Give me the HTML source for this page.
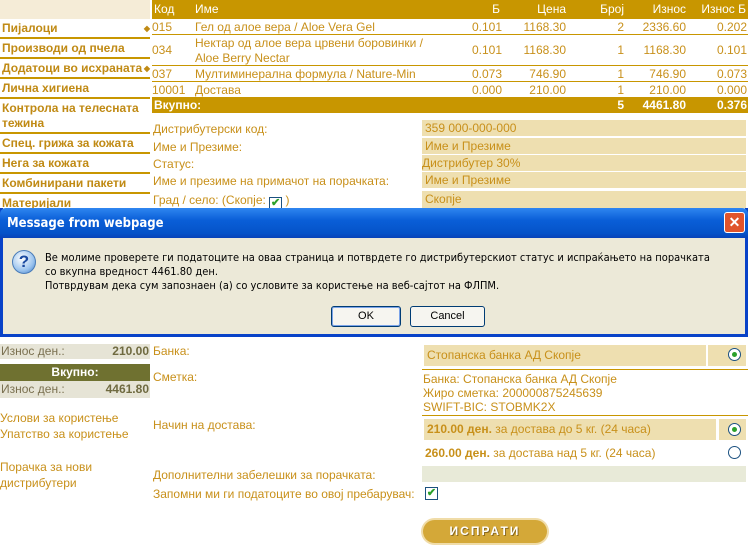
<!DOCTYPE html>
<html><head><meta charset="utf-8"><style>
*{margin:0;padding:0;box-sizing:border-box}
body{width:748px;height:550px;overflow:hidden;background:#fff;font-family:"Liberation Sans",Arial,sans-serif;font-size:12px;color:#c8901a;position:relative}
.a{position:absolute;white-space:nowrap}
.m{position:absolute;left:0;width:150px;font-weight:bold;font-size:12px;color:#c08a14;border-bottom:2px solid #c89600;padding-left:2px}
.hd{background:#c89600;color:#fff}
.r{text-align:right}
.f{position:absolute;background:#eedfb0;padding-left:3px;line-height:16px}
.line{position:absolute;height:1px;background:#c89600}
.rad{position:absolute;width:13px;height:13px;border:1px solid #1c5180;border-radius:50%;background:#fff}
.rad.on::after{content:"";position:absolute;left:3px;top:3px;width:5px;height:5px;border-radius:50%;background:#2aa02a}
.chk{position:absolute;width:13px;height:13px;border:1px solid #1c5180;background:#fff;color:#2aa02a;font-size:11px;line-height:11px;text-align:center;font-weight:bold}
</style></head><body>
<div class="a" style="left:0;top:0;width:150px;height:19px;background:#f5ecd7"></div>
<div class="m" style="top:19px;height:20px;line-height:19px">Пијалоци<span style="position:absolute;right:0;font-size:8px">◆</span></div>
<div class="m" style="top:39px;height:20px;line-height:19px">Производи од пчела</div>
<div class="m" style="top:59px;height:20px;line-height:19px">Додатоци во исхраната<span style="position:absolute;right:0;font-size:8px">◆</span></div>
<div class="m" style="top:79px;height:20px;line-height:19px">Лична хигиена</div>
<div class="m" style="top:99px;height:35px;line-height:15px;padding-top:2px">Контрола на телесната<br>тежина</div>
<div class="m" style="top:134px;height:20px;line-height:19px">Спец. грижа за кожата</div>
<div class="m" style="top:154px;height:20px;line-height:19px">Нега за кожата</div>
<div class="m" style="top:174px;height:20px;line-height:19px">Комбинирани пакети</div>
<div class="m" style="top:194px;height:20px;line-height:19px;border:0">Материјали</div>

<div class="a hd" style="left:152px;top:0;width:596px;height:19px"></div>
<div class="a" style="left:154px;top:2px;color:#fff">Код</div>
<div class="a" style="left:195px;top:2px;color:#fff">Име</div>
<div class="a r" style="left:440px;top:2px;width:60px;color:#fff">Б</div>
<div class="a r" style="left:500px;top:2px;width:66px;color:#fff">Цена</div>
<div class="a r" style="left:560px;top:2px;width:64px;color:#fff">Број</div>
<div class="a r" style="left:620px;top:2px;width:66px;color:#fff">Износ</div>
<div class="a r" style="left:686px;top:2px;width:60px;color:#fff">Износ Б</div>

<div class="line" style="left:152px;top:34px;width:596px"></div>
<div class="line" style="left:152px;top:65px;width:596px"></div>
<div class="line" style="left:152px;top:81px;width:596px"></div>
<div class="a" style="left:152px;top:20px">015</div><div class="a" style="left:195px;top:20px">Гел од алое вера / Aloe Vera Gel</div>
<div class="a" style="left:152px;top:43px">034</div><div class="a" style="left:195px;top:36px;line-height:15px">Нектар од алое вера црвени боровинки /<br>Aloe Berry Nectar</div>
<div class="a" style="left:152px;top:67px">037</div><div class="a" style="left:195px;top:67px">Мултиминерална формула / Nature-Min</div>
<div class="a" style="left:152px;top:83px">10001</div><div class="a" style="left:195px;top:83px">Достава</div>
<div class="a r" style="left:420px;top:20px;width:82px">0.101</div>
<div class="a r" style="left:420px;top:43px;width:82px">0.101</div>
<div class="a r" style="left:420px;top:67px;width:82px">0.073</div>
<div class="a r" style="left:420px;top:83px;width:82px">0.000</div>
<div class="a r" style="left:500px;top:20px;width:66px">1168.30</div>
<div class="a r" style="left:500px;top:43px;width:66px">1168.30</div>
<div class="a r" style="left:500px;top:67px;width:66px">746.90</div>
<div class="a r" style="left:500px;top:83px;width:66px">210.00</div>
<div class="a r" style="left:560px;top:20px;width:64px">2</div>
<div class="a r" style="left:560px;top:43px;width:64px">1</div>
<div class="a r" style="left:560px;top:67px;width:64px">1</div>
<div class="a r" style="left:560px;top:83px;width:64px">1</div>
<div class="a r" style="left:600px;top:20px;width:86px">2336.60</div>
<div class="a r" style="left:600px;top:43px;width:86px">1168.30</div>
<div class="a r" style="left:600px;top:67px;width:86px">746.90</div>
<div class="a r" style="left:600px;top:83px;width:86px">210.00</div>
<div class="a r" style="left:686px;top:20px;width:61px">0.202</div>
<div class="a r" style="left:686px;top:43px;width:61px">0.101</div>
<div class="a r" style="left:686px;top:67px;width:61px">0.073</div>
<div class="a r" style="left:686px;top:83px;width:61px">0.000</div>
<div class="a hd" style="left:152px;top:97px;width:596px;height:16px;font-weight:bold;padding-left:2px;line-height:16px">Вкупно:</div>
<div class="a r" style="left:560px;top:98px;width:64px;color:#fff;font-weight:bold">5</div>
<div class="a r" style="left:600px;top:98px;width:86px;color:#fff;font-weight:bold">4461.80</div>
<div class="a r" style="left:686px;top:98px;width:61px;color:#fff;font-weight:bold">0.376</div>

<div class="a" style="left:153px;top:122px">Дистрибутерски код:</div>
<div class="a" style="left:153px;top:140px">Име и Презиме:</div>
<div class="a" style="left:153px;top:157px">Статус:</div>
<div class="a" style="left:153px;top:174px">Име и презиме на примачот на порачката:</div>
<div class="a" style="left:153px;top:193px">Град / село: (Скопје: <span class="chk" style="position:relative;display:inline-block;vertical-align:-2px">✔</span> )</div>
<div class="f" style="left:422px;top:120px;width:324px">359 000-000-000</div>
<div class="f" style="left:422px;top:138px;width:324px">Име и Презиме</div>
<div class="f" style="left:422px;top:155px;width:324px;padding-left:0">Дистрибутер 30%</div>
<div class="f" style="left:422px;top:172px;width:324px">Име и Презиме</div>
<div class="f" style="left:422px;top:191px;width:324px;height:17px">Скопје</div>

<!-- dialog -->
<div class="a" style="left:0;top:208px;width:748px;height:129px;background:#ece9d8;border:3px solid #0842c8;border-top:0"></div>
<div class="a" style="left:0;top:208px;width:748px;height:30px;background:linear-gradient(#2f86f0,#0a5fd8 40%,#0552c8 85%,#0842b8);border-radius:6px 6px 0 0"></div>
<div class="a" style="left:7px;top:216px;color:#fff;font-weight:bold;font-size:13px;font-family:'DejaVu Sans Condensed','Liberation Sans',sans-serif">Message from webpage</div>
<div class="a" style="left:724px;top:212px;width:21px;height:21px;background:#e0542c;border:1px solid #fff;border-radius:3px;color:#fff;font-weight:bold;text-align:center;line-height:19px;font-size:14px">✕</div>
<div class="a" style="left:12px;top:250px;width:24px;height:24px;border-radius:50%;background:radial-gradient(circle at 40% 35%,#fff,#9cc4ee 60%,#3a7ac8);border:1px solid #4a7cb8;color:#1a4aa0;font-weight:bold;font-size:17px;text-align:center;line-height:22px">?</div>
<div class="a" style="left:45px;top:251px;font-size:11px;color:#000;line-height:14px;font-family:'DejaVu Sans Condensed','Liberation Sans',sans-serif">Ве молиме проверете ги податоците на оваа страница и потврдете го дистрибутерскиот статус и испраќањето на порачката<br>со вкупна вредност 4461.80 ден.<br>Потврдувам дека сум запознаен (а) со условите за користење на веб-сајтот на ФЛПМ.</div>
<div class="a" style="left:331px;top:306px;width:70px;height:21px;border:1px solid #003c74;border-radius:3px;background:#f6f5f0;box-shadow:inset 0 0 0 1px #7ba3e8;color:#000;font-size:11px;text-align:center;line-height:19px">OK</div>
<div class="a" style="left:410px;top:306px;width:75px;height:21px;border:1px solid #003c74;border-radius:3px;background:#f6f5f0;color:#000;font-size:11px;text-align:center;line-height:19px">Cancel</div>

<!-- lower left -->
<div class="a" style="left:0;top:344px;width:150px;height:15px;background:#e6e4d6;color:#7a7050;line-height:15px;padding-left:1px">Износ ден.:<b style="position:absolute;right:1px;color:#6f6a40">210.00</b></div>
<div class="a" style="left:0;top:364px;width:150px;height:17px;background:#6f7130;color:#fff;font-weight:bold;text-align:center;line-height:17px">Вкупно:</div>
<div class="a" style="left:0;top:381px;width:150px;height:17px;background:#e6e4d6;color:#7a7050;line-height:17px;padding-left:1px">Износ ден.:<b style="position:absolute;right:1px;color:#6f6a40">4461.80</b></div>
<div class="a" style="left:0;top:410px;line-height:16px">Услови за користење<br>Упатство за користење</div>
<div class="a" style="left:0;top:459px;line-height:16px">Порачка за нови<br>дистрибутери</div>

<div class="a" style="left:153px;top:344px">Банка:</div>
<div class="a" style="left:153px;top:370px">Сметка:</div>
<div class="a" style="left:153px;top:418px">Начин на достава:</div>
<div class="a" style="left:153px;top:468px">Дополнителни забелешки за порачката:</div>
<div class="a" style="left:153px;top:487px">Запомни ми ги податоците во овој пребарувач:</div>
<div class="f" style="left:424px;top:345px;width:282px;height:21px;line-height:21px">Стопанска банка АД Скопје</div>
<div class="f" style="left:708px;top:345px;width:38px;height:21px"></div>
<div class="rad on" style="left:728px;top:348px"></div>
<div class="line" style="left:422px;top:369px;width:326px"></div>
<div class="a" style="left:423px;top:372px;line-height:14px">Банка: Стопанска банка АД Скопје<br>Жиро сметка: 200000875245639<br>SWIFT-BIC: STOBMK2X</div>
<div class="line" style="left:422px;top:415px;width:326px"></div>
<div class="f" style="left:424px;top:419px;width:292px;height:21px;line-height:21px"><b>210.00 ден.</b> за достава до 5 кг. (24 часа)</div>
<div class="f" style="left:719px;top:419px;width:27px;height:21px"></div>
<div class="rad on" style="left:728px;top:423px"></div>
<div class="a" style="left:425px;top:446px"><b>260.00 ден.</b> за достава над 5 кг. (24 часа)</div>
<div class="rad" style="left:728px;top:446px"></div>
<div class="a" style="left:422px;top:466px;width:324px;height:16px;background:#e8ead8"></div>
<div class="chk" style="left:425px;top:487px">✔</div>
<div class="a" style="left:423px;top:520px;width:124px;height:23px;border-radius:12px;background:#d4a838;box-shadow:0 0 0 2px #f0dca8;color:#fff;font-weight:bold;text-align:center;line-height:23px;letter-spacing:2px;text-shadow:1px 1px 0 #8a6a20">ИСПРАТИ</div>
</body></html>
